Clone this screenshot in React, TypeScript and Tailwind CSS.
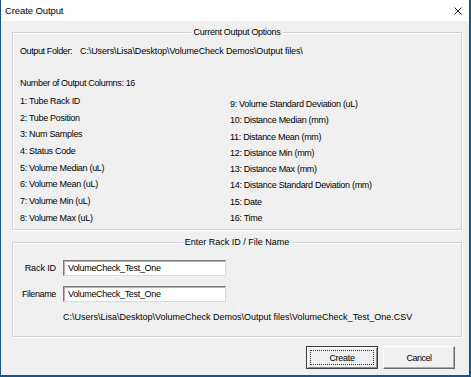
import React from "react";

const leftItems = [
  "1: Tube Rack ID",
  "2: Tube Position",
  "3: Num Samples",
  "4: Status Code",
  "5: Volume Median (uL)",
  "6: Volume Mean (uL)",
  "7: Volume Min (uL)",
  "8: Volume Max (uL)",
];

const rightItems = [
  "9: Volume Standard Deviation (uL)",
  "10: Distance Median (mm)",
  "11: Distance Mean (mm)",
  "12: Distance Min (mm)",
  "13: Distance Max (mm)",
  "14: Distance Standard Deviation (mm)",
  "15: Date",
  "16: Time",
];

function Group({
  title,
  titleClass,
  className,
  children,
}: {
  title: string;
  titleClass: string;
  className: string;
  children: React.ReactNode;
}) {
  return (
    <div
      className={`relative border border-[#d3d3d3] shadow-[inset_1px_1px_0_#ffffff,1px_1px_0_#ffffff] ${className}`}
    >
      <span
        className={`absolute left-1/2 -translate-x-1/2 top-[-7px] bg-[#f0f0f0] px-[2px] leading-[12px] whitespace-nowrap ${titleClass}`}
      >
        {title}
      </span>
      {children}
    </div>
  );
}

function Field({
  label,
  labelClass,
  value,
}: {
  label: string;
  labelClass: string;
  value: string;
}) {
  return (
    <div className="flex items-center h-[16px]">
      <span className={`w-[43px] text-right leading-[12px] ${labelClass}`}>{label}</span>
      <div className="ml-[7px] w-[163px] h-[16px] bg-white border border-t-[#7a7a7a] border-l-[#7a7a7a] border-r-[#d9d9d9] border-b-[#d9d9d9] shadow-[inset_1px_1px_0_#b4b4b4] flex items-center pl-[4px] leading-[12px] tracking-[-0.32px]">
        {value}
      </div>
    </div>
  );
}

export default function App() {
  return (
    <div className="w-[471px] h-[377px] bg-[#f0f0f0] border-l border-r-2 border-b-2 border-[#1d5285] flex flex-col text-black text-[9px] tracking-[-0.3px] font-['Liberation_Sans',Arial,sans-serif]">
      <div className="h-[21px] shrink-0 bg-white flex items-center justify-between pl-[4px] pr-[7px]">
        <span className="text-[9.5px] tracking-[-0.1px] leading-[12px]">Create Output</span>
        <svg width="8" height="8" viewBox="0 0 8 8" className="block">
          <path d="M0.5 0.5 L7.5 7.5 M7.5 0.5 L0.5 7.5" stroke="#222" strokeWidth="1" fill="none" />
        </svg>
      </div>

      <div className="pl-[11px] pr-[7px] pt-[11px] flex flex-col">
        <Group
          title="Current Output Options"
          titleClass="tracking-[-0.28px]"
          className="h-[198px] pt-[12px] pl-[7px]"
        >
          <div className="flex leading-[12px]">
            <span className="w-[60px] tracking-[-0.38px]">Output Folder:</span>
            <span className="tracking-[-0.12px]">
              C:\Users\Lisa\Desktop\VolumeCheck Demos\Output files\
            </span>
          </div>
          <div className="mt-[20px] leading-[12px] tracking-[-0.34px]">
            Number of Output Columns: 16
          </div>
          <div className="mt-[4px] grid grid-cols-[210px_1fr]">
            <div className="flex flex-col leading-[16.65px]">
              {leftItems.map((t) => (
                <span key={t}>{t}</span>
              ))}
            </div>
            <div className="flex flex-col pt-[3px] leading-[16.3px]">
              {rightItems.map((t) => (
                <span key={t}>{t}</span>
              ))}
            </div>
          </div>
        </Group>

        <Group
          title="Enter Rack ID / File Name"
          titleClass="tracking-normal"
          className="mt-[12px] h-[95px] pt-[17px]"
        >
          <div className="flex flex-col gap-[10px]">
            <Field label="Rack ID" labelClass="tracking-[-0.1px]" value="VolumeCheck_Test_One" />
            <Field label="Filename" labelClass="tracking-[-0.37px]" value="VolumeCheck_Test_One" />
          </div>
          <div className="mt-[9px] pl-[50px] leading-[12px] whitespace-nowrap tracking-normal">
            C:\Users\Lisa\Desktop\VolumeCheck Demos\Output files\VolumeCheck_Test_One.CSV
          </div>
        </Group>
      </div>

      <div className="mt-[9px] flex justify-end gap-[5px] pr-[14px]">
        <button className="relative w-[72px] h-[23px] bg-[#f0f0f0] border border-[#3c3c3c] shadow-[inset_1px_1px_0_#ffffff,inset_-1px_-1px_0_#8a8a8a] flex items-center justify-center leading-[12px]">
          <span className="absolute inset-[3px] border border-dotted border-[#333]" />
          Create
        </button>
        <button className="w-[72px] h-[23px] bg-[#f0f0f0] border border-t-white border-l-white border-r-[#6a6a6a] border-b-[#6a6a6a] shadow-[inset_-1px_-1px_0_#a8a8a8] flex items-center justify-center leading-[12px] tracking-[-0.5px]">
          Cancel
        </button>
      </div>
    </div>
  );
}
